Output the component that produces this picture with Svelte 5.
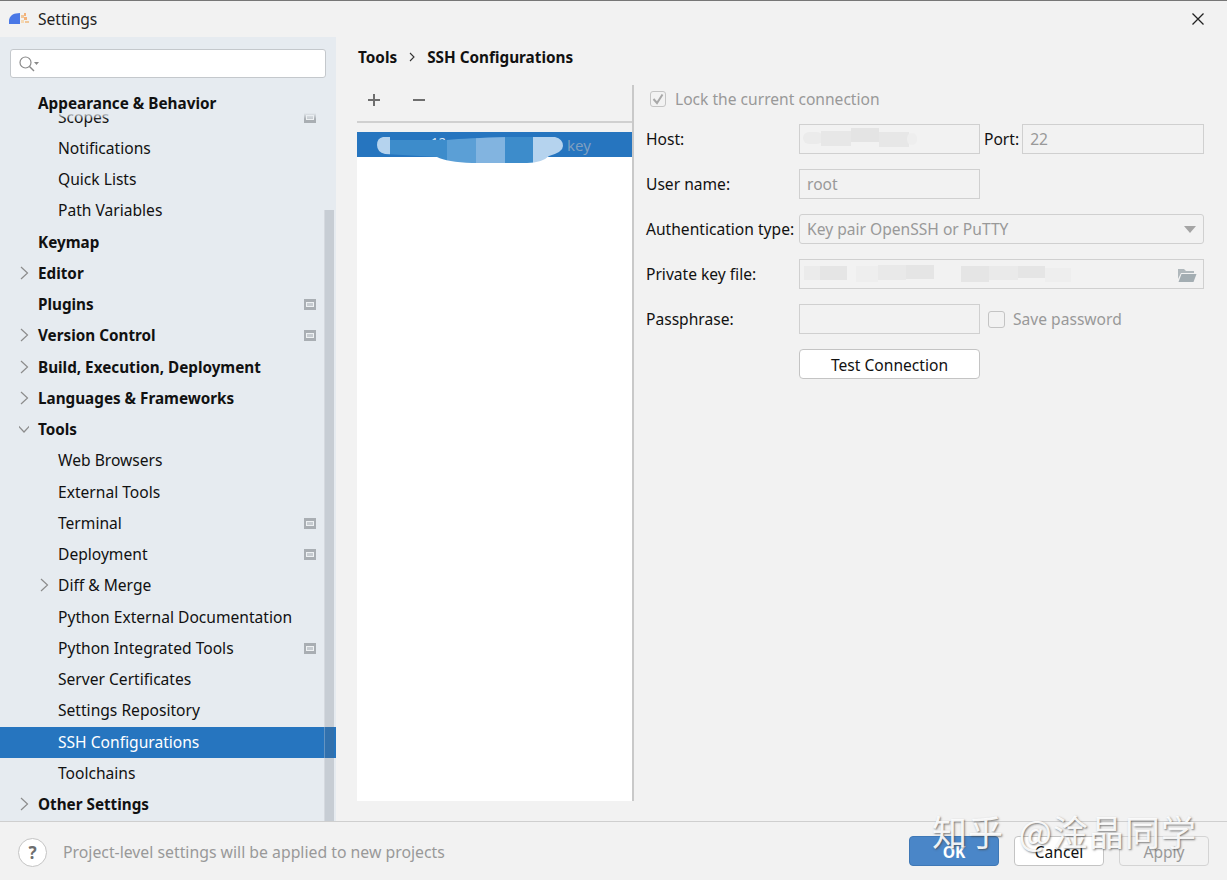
<script lang="ts">
	type Row = { label: string; level: number; bold?: boolean; arrow?: 'right' | 'down'; marker?: boolean; selected?: boolean };

	const rows: Row[] = [
		{ label: 'Scopes', level: 1, marker: true },
		{ label: 'Notifications', level: 1 },
		{ label: 'Quick Lists', level: 1 },
		{ label: 'Path Variables', level: 1 },
		{ label: 'Keymap', level: 0, bold: true },
		{ label: 'Editor', level: 0, bold: true, arrow: 'right' },
		{ label: 'Plugins', level: 0, bold: true, marker: true },
		{ label: 'Version Control', level: 0, bold: true, arrow: 'right', marker: true },
		{ label: 'Build, Execution, Deployment', level: 0, bold: true, arrow: 'right' },
		{ label: 'Languages & Frameworks', level: 0, bold: true, arrow: 'right' },
		{ label: 'Tools', level: 0, bold: true, arrow: 'down' },
		{ label: 'Web Browsers', level: 1 },
		{ label: 'External Tools', level: 1 },
		{ label: 'Terminal', level: 1, marker: true },
		{ label: 'Deployment', level: 1, marker: true },
		{ label: 'Diff & Merge', level: 1, arrow: 'right' },
		{ label: 'Python External Documentation', level: 1 },
		{ label: 'Python Integrated Tools', level: 1, marker: true },
		{ label: 'Server Certificates', level: 1 },
		{ label: 'Settings Repository', level: 1 },
		{ label: 'SSH Configurations', level: 1, selected: true },
		{ label: 'Toolchains', level: 1 },
		{ label: 'Other Settings', level: 0, bold: true, arrow: 'right' }
	];
</script>

<div class="window">
	<header class="titlebar">
		<svg class="logo" width="22" height="14" viewBox="0 0 22 14">
			<path d="M1 12 V9 C1 5 4 2 8 1.5 L12 1 V12 Z" fill="#4a78e6" />
			<rect x="13" y="3" width="3" height="3" fill="#f0c79a" />
			<rect x="16" y="1" width="2" height="3" fill="#f3b27a" />
			<rect x="16" y="5" width="3" height="3" fill="#f3b27a" />
			<rect x="13" y="8" width="3" height="3" fill="#f5d9b5" />
			<rect x="17" y="9" width="4" height="2" fill="#f0c79a" />
		</svg>
		<span>Settings</span>
		<svg class="close" width="14" height="14" viewBox="0 0 14 14">
			<path d="M1.5 1.5 L12.5 12.5 M12.5 1.5 L1.5 12.5" stroke="#222" stroke-width="1.3" fill="none" />
		</svg>
	</header>

	<div class="body">
		<aside class="sidebar">
			<div class="search">
				<svg width="22" height="18" viewBox="0 0 22 18">
					<circle cx="7.5" cy="7.5" r="5.5" stroke="#8a8a8a" stroke-width="1.2" fill="none" />
					<path d="M11.5 11.5 L16 16" stroke="#8a8a8a" stroke-width="1.4" />
					<path d="M16 7 L21 7 L18.5 10 Z" fill="#8a8a8a" />
				</svg>
			</div>
			<div class="tree">
				<div class="pinned">Appearance &amp; Behavior</div>
				{#each rows as row}
					<div class="row" class:bold={row.bold} class:selected={row.selected} class:nested={row.level === 1}>
						{#if row.arrow}
							<svg class="arrow" width="10" height="14" viewBox="0 0 10 14">
								{#if row.arrow === 'right'}
									<path d="M2 1 L8.5 7 L2 13" stroke="#8c8c8c" stroke-width="1.2" fill="none" />
								{:else}
									<path d="M-1 3.5 L5 10 L11 3.5" stroke="#8c8c8c" stroke-width="1.2" fill="none" />
								{/if}
							</svg>
						{/if}
						<span>{row.label}</span>
						{#if row.marker}
							<span class="marker"><i></i></span>
						{/if}
					</div>
				{/each}
				<div class="scrollbar"></div>
			</div>
		</aside>

		<main class="content">
			<nav class="crumbs">
				<span>Tools</span>
				<svg width="8" height="12" viewBox="0 0 8 12">
					<path d="M2 2 L6 6 L2 10" stroke="#333" stroke-width="1.1" fill="none" />
				</svg>
				<span>SSH Configurations</span>
			</nav>

			<div class="panes">
				<section class="list-pane">
					<div class="toolbar">
						<svg width="14" height="14" viewBox="0 0 14 14">
							<path d="M7 1 V13 M1 7 H13" stroke="#6e6e6e" stroke-width="2" />
						</svg>
						<svg width="14" height="14" viewBox="0 0 14 14">
							<path d="M1 7 H13" stroke="#6e6e6e" stroke-width="2" />
						</svg>
					</div>
					<div class="list">
						<div class="list-item">
							<span class="item-ip">12</span>
							<span class="item-text">key</span>
							<svg class="smear" width="190" height="30" viewBox="0 0 190 30">
								<defs>
									<clipPath id="smear-shape">
										<path d="M6 1 L13 1 L13 4 L70 4 Q90 2 130 1 L178 1 Q186 3 186 10 Q186 16 172 20 Q165 27 150 27 L95 27 Q70 26 60 21 L8 18 Q0 16 0 9 Q0 2 6 1 Z" />
									</clipPath>
								</defs>
								<g clip-path="url(#smear-shape)">
									<rect x="0" y="0" width="13" height="30" fill="#b5d3ee" />
									<rect x="13" y="0" width="57" height="30" fill="#3d8ccb" />
									<rect x="70" y="0" width="29" height="30" fill="#5b9fd6" />
									<rect x="99" y="0" width="29" height="30" fill="#82b4e0" />
									<rect x="128" y="0" width="28" height="30" fill="#3d8ccb" />
									<rect x="156" y="0" width="30" height="30" fill="#b5d3ee" />
								</g>
							</svg>
						</div>
					</div>
				</section>

				<section class="form">
					<label class="lock">
						<span class="check on">
							<svg width="12" height="12" viewBox="0 0 12 12">
								<path d="M1.5 6 L5 10 L10.5 1.5" stroke="#a8a8a8" stroke-width="2" fill="none" />
							</svg>
						</span>
						<span>Lock the current connection</span>
					</label>

					<div class="grid">
						<span class="label">Host:</span>
						<div class="host-line">
							<div class="field half">
								<svg class="blur" width="120" height="24" viewBox="0 0 120 24">
									<rect x="2" y="5" width="20" height="12" rx="6" fill="#ebebeb" />
									<rect x="20" y="4" width="30" height="15" fill="#e7e7e7" />
									<rect x="50" y="1" width="28" height="14" fill="#e4e4e4" />
									<rect x="78" y="5" width="30" height="15" fill="#e7e7e7" />
									<rect x="106" y="6" width="10" height="12" rx="5" fill="#eeeeee" />
								</svg>
							</div>
							<span class="label port">Port:</span>
							<div class="field grow muted">22</div>
						</div>

						<span class="label">User name:</span>
						<div class="field half muted">root</div>

						<span class="label">Authentication type:</span>
						<div class="field select muted">
							<span>Key pair OpenSSH or PuTTY</span>
							<svg width="12" height="7" viewBox="0 0 12 7"><path d="M0 0 H12 L6 7 Z" fill="#a5a5a5" /></svg>
						</div>

						<span class="label">Private key file:</span>
						<div class="field keyfile">
							<svg class="blur" width="276" height="24" viewBox="0 0 276 24">
								<rect x="3" y="4" width="16" height="14" fill="#ebebeb" />
								<rect x="19" y="4" width="27" height="14" fill="#e5e5e5" />
								<rect x="55" y="4" width="22" height="16" fill="#eeeeee" />
								<rect x="77" y="3" width="28" height="15" fill="#e9e9e9" />
								<rect x="105" y="3" width="28" height="14" fill="#e5e5e5" />
								<rect x="160" y="4" width="28" height="16" fill="#e5e5e5" />
								<rect x="188" y="4" width="29" height="14" fill="#eaeaea" />
								<rect x="217" y="4" width="27" height="12" fill="#e5e5e5" />
								<rect x="244" y="6" width="26" height="14" fill="#eeeeee" />
							</svg>
							<svg class="folder" width="20" height="15" viewBox="0 0 20 15">
								<path d="M1 1 H7 L9 3 H17 V5 H4 L1 11 Z" fill="#b0b8bc" />
								<path d="M4.5 6 H19.5 L16.5 14 H1.5 Z" fill="#a3adb2" />
							</svg>
						</div>

						<span class="label">Passphrase:</span>
						<div class="pass-line">
							<div class="field half"></div>
							<span class="check"></span>
							<span class="muted">Save password</span>
						</div>

						<span></span>
						<button class="btn test">Test Connection</button>
					</div>
				</section>
			</div>
		</main>
	</div>

	<footer class="footer">
		<span class="help">?</span>
		<span class="hint">Project-level settings will be applied to new projects</span>
		<div class="actions">
			<button class="btn ok">OK</button>
			<button class="btn">Cancel</button>
			<button class="btn apply">Apply</button>
		</div>
		<span class="watermark">知乎 @淦晶同学</span>
	</footer>
</div>

<style>
	:global(body) {
		margin: 0;
		background: #f2f2f2;
	}

	.window {
		width: 1227px;
		height: 880px;
		display: flex;
		flex-direction: column;
		overflow: hidden;
		background: #f2f2f2;
		color: #111;
		font-family: "Noto Sans", "Noto Sans CJK SC", sans-serif;
		font-size: 15.6px;
		box-sizing: border-box;
		border-top: 1px solid #777;
	}

	.titlebar {
		height: 36px;
		flex-shrink: 0;
		display: flex;
		align-items: center;
		padding: 0 22px 0 8px;
		gap: 8px;
		color: #222;
		box-sizing: border-box;
	}

	.close {
		margin-left: auto;
	}

	.body {
		flex: 1;
		display: flex;
		min-height: 0;
	}

	.sidebar {
		width: 336px;
		flex-shrink: 0;
		display: flex;
		flex-direction: column;
		background: #e6ebf0;
		box-sizing: border-box;
		padding-top: 12px;
	}

	.search {
		height: 29px;
		margin: 0 10px;
		background: #fff;
		border: 1px solid #c4c8cc;
		border-radius: 3px;
		display: flex;
		align-items: center;
		padding-left: 7px;
		box-sizing: border-box;
		flex-shrink: 0;
	}

	.tree {
		position: relative;
		flex: 1;
		margin-top: 10px;
		padding-top: 13.7px;
		overflow: hidden;
		min-height: 0;
	}

	.pinned {
		position: absolute;
		top: 0;
		left: 0;
		right: 12px;
		height: 25px;
		line-height: 30px;
		padding-left: 38px;
		font-size: 15.3px;
		font-weight: 700;
		background: #e6ebf0;
		z-index: 2;
	}

	/* soft edge under the pinned header */
	.pinned::after {
		content: '';
		position: absolute;
		left: 0;
		right: 0;
		top: 25px;
		height: 6px;
		background: linear-gradient(#e6ebf0, rgba(230, 235, 240, 0));
	}

	.row {
		position: relative;
		height: 31.25px;
		line-height: 31.25px;
		padding-left: 38px;
		white-space: nowrap;
	}

	.row.nested {
		padding-left: 58px;
	}

	.row.bold {
		font-size: 15.25px;
		font-weight: 700;
	}

	.row.selected {
		background: #2675bf;
		color: #fff;
	}

	.arrow {
		position: absolute;
		left: 19px;
		top: 8px;
	}

	.row.nested .arrow {
		left: 39px;
	}

	.marker {
		position: absolute;
		left: 304px;
		top: 10px;
		width: 12px;
		height: 11px;
		background: #a9aeb3;
		display: flex;
		align-items: center;
		justify-content: center;
	}

	.marker i {
		width: 8px;
		height: 5px;
		background: #c6cbd0;
		border: 1px solid #eef1f3;
		box-sizing: border-box;
	}

	.scrollbar {
		position: absolute;
		left: 324px;
		top: 122px;
		bottom: 0;
		width: 10px;
		background: rgba(90, 100, 115, 0.22);
		border-left: 1px solid rgba(255, 255, 255, 0.25);
		box-sizing: border-box;
		z-index: 3;
	}

	.content {
		flex: 1;
		min-width: 0;
		display: flex;
		flex-direction: column;
		padding-left: 21px;
	}

	.crumbs {
		height: 48px;
		display: flex;
		align-items: center;
		gap: 11px;
		font-size: 15.3px;
		font-weight: 700;
		flex-shrink: 0;
		padding: 0 0 8px 1px;
		box-sizing: border-box;
	}

	.panes {
		flex: 1;
		display: flex;
		min-height: 0;
		margin-bottom: 20px;
	}

	.list-pane {
		width: 275px;
		flex-shrink: 0;
		display: flex;
		flex-direction: column;
	}

	.toolbar {
		height: 38px;
		display: flex;
		align-items: center;
		gap: 31px;
		padding: 0 0 7px 10px;
		border-bottom: 2px solid #d0d0d0;
		box-sizing: border-box;
		flex-shrink: 0;
	}

	.list {
		flex: 1;
		margin-top: 9px;
		background: #fff;
	}

	.list-item {
		position: relative;
		height: 25px;
		background: #2675bf;
		line-height: 26px;
	}

	.item-text {
		position: absolute;
		left: 210px;
		color: #7f9fc0;
		font-size: 15px;
	}

	.item-ip {
		position: absolute;
		left: 74px;
		top: 3px;
		line-height: 14px;
		color: #dbe8f5;
		font-size: 13px;
	}

	.smear {
		position: absolute;
		left: 20px;
		top: 4px;
	}

	.form {
		flex: 1;
		min-width: 0;
		border-left: 2px solid #c9c9c9;
		padding: 0 23px 0 12px;
	}

	.lock {
		display: flex;
		align-items: center;
		gap: 9px;
		height: 28px;
		margin-bottom: 11px;
		padding-left: 4px;
		color: #999;
	}

	.check {
		width: 16px;
		height: 16px;
		border: 1px solid #c4c4c4;
		border-radius: 3px;
		background: #f2f2f2;
		box-sizing: border-box;
		display: flex;
		align-items: center;
		justify-content: center;
		flex-shrink: 0;
	}

	.grid {
		display: grid;
		grid-template-columns: 153px 1fr;
		row-gap: 15px;
		align-items: center;
	}

	.label {
		color: #111;
	}

	.host-line,
	.pass-line {
		display: flex;
		align-items: center;
	}

	.port {
		margin: 0 3px 0 4px;
	}

	.field {
		position: relative;
		height: 30px;
		line-height: 29px;
		padding-left: 7px;
		border: 1px solid #d0d0d0;
		background: #f2f2f2;
		box-sizing: border-box;
	}

	.half {
		width: 181px;
		flex-shrink: 0;
	}

	.grow {
		flex: 1;
	}

	.muted {
		color: #999;
	}

	.select {
		display: flex;
		align-items: center;
		justify-content: space-between;
		padding-right: 7px;
		border-radius: 3px;
	}

	.blur {
		position: absolute;
		left: 1px;
		top: 2px;
	}

	.folder {
		position: absolute;
		right: 6px;
		top: 8px;
	}

	.pass-line .check {
		margin: 0 8px 0 8px;
		width: 17px;
		height: 17px;
	}

	.btn {
		width: 90px;
		height: 30px;
		padding: 1px 0 0;
		font: inherit;
		color: #111;
		background: #fff;
		border: 1px solid #c4c4c4;
		border-radius: 4px;
		box-sizing: border-box;
	}

	.test {
		width: 181px;
	}

	.footer {
		position: relative;
		height: 59px;
		flex-shrink: 0;
		display: flex;
		align-items: center;
		border-top: 1px solid #cfcfcf;
		padding: 0 18px 0 18px;
		box-sizing: border-box;
	}

	.help {
		width: 29px;
		height: 29px;
		margin-top: 2px;
		border-radius: 50%;
		border: 1px solid #c4c4c4;
		background: #fff;
		box-sizing: border-box;
		display: flex;
		align-items: center;
		justify-content: center;
		font-weight: 700;
		font-size: 17px;
		color: #6e6e6e;
	}

	.hint {
		margin: 2px 0 0 16px;
		font-size: 15.8px;
		color: #999;
	}

	.actions {
		margin-left: auto;
		display: flex;
		gap: 15px;
	}

	.ok {
		background: #4a86c8;
		border-color: #3f78b6;
		color: #fff;
		font-weight: 700;
	}

	.apply {
		background: #f2f2f2;
		border-color: #d4d4d4;
		color: #999;
	}

	.watermark {
		position: absolute;
		left: 932px;
		top: -13px;
		font-size: 35px;
		letter-spacing: 1px;
		word-spacing: 6px;
		line-height: 44px;
		white-space: nowrap;
		color: rgba(255, 255, 255, 0.92);
		text-shadow: 1px 1px 2px rgba(70, 70, 70, 0.7);
		font-family: "Noto Sans CJK SC", "Noto Sans", sans-serif;
	}
</style>
